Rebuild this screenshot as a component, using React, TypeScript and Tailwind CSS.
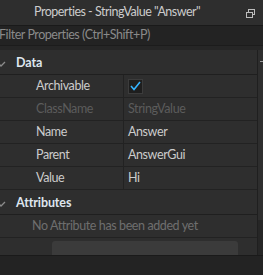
const rows = [
  { label: 'Archivable', value: 'check' },
  { label: 'ClassName', value: 'StringValue', disabled: true },
  { label: 'Name', value: 'Answer' },
  { label: 'Parent', value: 'AnswerGui' },
  { label: 'Value', value: 'Hi' },
]

const Chevron = () => (
  <svg width="10" height="8" viewBox="0 0 10 8" className="absolute left-[-4px] top-[10px]">
    <path d="M1 2 L5 6 L9 2" fill="none" stroke="#8c8c8c" strokeWidth="1.3" />
  </svg>
)

const SectionHeader = ({ title }: { title: string }) => (
  <div className="relative h-[25px] border-b border-[#1f1f1f] bg-[#2e2e2e] flex items-center pl-4 pt-[3px]">
    <Chevron />
    <span className="text-[12.5px] font-bold text-[#dfe6ee] tracking-[-0.1px]">{title}</span>
  </div>
)

const Row = ({ label, value, disabled }: { label: string; value: string; disabled?: boolean }) => (
  <div className="flex h-[23px] border-b border-[#222222] bg-[#2e2e2e] text-[12.5px] tracking-[-0.4px]">
    <div className={`w-[124px] shrink-0 pl-9 flex items-center border-r border-[#222222] ${disabled ? 'text-[#5c5c5c]' : 'text-[#cccccc]'}`}>
      {label}
    </div>
    <div className={`flex-1 pl-1 flex items-center ${disabled ? 'text-[#5c5c5c]' : 'text-[#cccccc]'}`}>
      {value === 'check' ? (
        <div className="w-[15px] h-[15px] bg-[#1e1e1e] border border-[#3c3c3c] flex items-center justify-center">
          <svg width="11" height="10" viewBox="0 0 11 10">
            <path d="M1 5 L4 8.5 L10 1" fill="none" stroke="#35b4ff" strokeWidth="1.6" />
          </svg>
        </div>
      ) : (
        value
      )}
    </div>
  </div>
)

export default function App() {
  return (
    <div className="w-[263px] h-[275px] overflow-hidden bg-[#232323] font-['Lato',sans-serif] select-none">
      <div className="h-[26px] bg-[#2e2e2e] flex items-center border-b border-[#1a1a1a] relative">
        <div className="flex-1 pl-[34px] text-[12.5px] tracking-[-0.5px] text-[#cccccc]">Properties - StringValue "Answer"</div>
        <svg width="9" height="9" viewBox="0 0 9 9" className="absolute left-[246px] top-[9px]">
          <rect x="2.5" y="0.5" width="6" height="5" fill="none" stroke="#bdbdbd" />
          <rect x="0.5" y="3.5" width="6" height="5" fill="#2e2e2e" stroke="#bdbdbd" />
        </svg>
      </div>
      <div className="h-[20px] bg-[#232323] flex items-center text-[12.5px] tracking-[-0.45px] text-[#8a8a8a] border-b border-[#1c1c1c] ml-[-1px]">
        Filter Properties (Ctrl+Shift+P)
      </div>
      <div className="h-[4px] bg-[#262626]" />
      <div className="flex h-[206px] border-b border-[#1a1a1a]">
        <div className="w-[258px] shrink-0 border-r border-[#1f1f1f] bg-[#2e2e2e] overflow-hidden">
          <SectionHeader title="Data" />
          {rows.map((r) => (
            <Row key={r.label} label={r.label} value={r.value} disabled={r.disabled} />
          ))}
          <SectionHeader title="Attributes" />
          <div className="h-[23px] border-b border-[#222222] flex items-center pl-8 text-[12.5px] tracking-[-0.4px] text-[#6e6e6e]">
            No Attribute has been added yet
          </div>
          <div className="pt-[3px] pl-[52px]">
            <div className="w-[186px] h-[30px] rounded-[3px] bg-[#3b3b3b] flex justify-center pt-[11px] text-[12px] text-[#cccccc] overflow-hidden">
              <span>+ Add Attribute</span>
            </div>
          </div>
        </div>
        <div className="flex-1 flex flex-col">
          <div className="h-[170px] bg-[#2e2e2e] relative">
            <div className="absolute right-0 top-[11px] w-[3px] h-[1px] bg-[#9a9a9a]" />
          </div>
          <div className="flex-1 bg-[#262626]" />
        </div>
      </div>
    </div>
  )
}
